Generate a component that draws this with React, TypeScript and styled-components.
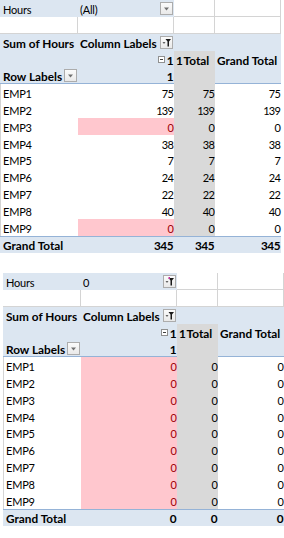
import React from "react";
import styled, { createGlobalStyle, css } from "styled-components";

const Global = createGlobalStyle`
  html, body { margin: 0; padding: 0; background: #ffffff; }
  body { font-family: Lato, "Open Sans", sans-serif; color: #000; }
`;

const C = {
  header: "#dce6f1",
  rule: "#95b3d7",
  total: "#d9d9d9",
  bad: "#ffc7ce",
  badText: "#9c0006",
  grid: "#d4d4d4",
};

const ROW_HEIGHTS = [17, 17, 17, 17, 16, 17, 17, 17, 17, 16, 17, 17, 17, 17, 17];

const Sheet = styled.div`
  width: 284px;
  height: 538px;
  overflow: hidden;
  display: flex;
  flex-direction: column;
  gap: 20px;
  background: #fff;
`;

const Pivot = styled.div<{ $cols: string; $left: number }>`
  display: grid;
  grid-template-columns: ${(p) => p.$cols};
  grid-template-rows: ${ROW_HEIGHTS.map((h) => `${h}px`).join(" ")};
  margin-left: ${(p) => p.$left}px;
`;

type Fill = "header" | "total" | "bad" | "plain" | "grid";

const fills: Record<Fill, string> = {
  header: C.header,
  total: C.total,
  bad: C.bad,
  plain: "#fff",
  grid: "#fff",
};

const Cell = styled.div<{
  $fill: Fill;
  $align?: "left" | "right" | "split";
  $bold?: boolean;
  $num?: boolean;
  $red?: boolean;
  $first?: boolean;
  $edge?: boolean;
  $under?: boolean;
  $over?: boolean;
}>`
  display: flex;
  align-items: flex-end;
  justify-content: ${(p) =>
    p.$align === "right" ? "flex-end" : p.$align === "split" ? "space-between" : "flex-start"};
  gap: 1px;
  min-width: 0;
  padding: 0 ${(p) => (p.$align === "split" ? 1 : p.$num ? 1 : 2)}px 1px
    ${(p) => (p.$first ? 3 : 2)}px;
  background: ${(p) => fills[p.$fill]};
  white-space: nowrap;
  line-height: 13px;
  font-size: ${(p) => (p.$bold ? 11.8 : 11)}px;
  font-weight: ${(p) => (p.$bold ? 700 : 400)};
  letter-spacing: ${(p) => (p.$num ? (p.$bold ? -0.5 : -0.8) : p.$bold ? 0 : -0.2)}px;
  color: ${(p) => (p.$red ? C.badText : "#000")};
  ${(p) => {
    const s: string[] = [];
    if (p.$fill === "grid") s.push(`inset -1px -1px 0 ${C.grid}`);
    if (p.$edge) s.push(`inset 1px 0 0 ${C.grid}`);
    if (p.$under) s.push(`inset 0 -1px 0 ${C.rule}`);
    if (p.$over) s.push(`inset 0 1px 0 ${C.rule}`);
    return s.length ? css`box-shadow: ${s.join(", ")};` : "";
  }}
`;

const DropBox = styled.span`
  align-self: center;
  flex: none;
  width: 13px;
  height: 13px;
  box-sizing: border-box;
  border: 1px solid #acacac;
  background: linear-gradient(#fbfbfb, #e9e9e9);
  display: flex;
  align-items: center;
  justify-content: center;
  letter-spacing: 0;
`;

const Collapse = styled.svg`
  flex: none;
  align-self: flex-end;
  margin: 0 1px 4px 0;
`;

function DropDown() {
  return (
    <DropBox>
      <svg width="11" height="11" viewBox="0 0 11 11">
        <path d="M3 4.5h5l-2.5 3z" fill="#707070" />
      </svg>
    </DropBox>
  );
}

function FilterOn({ accent }: { accent?: boolean }) {
  return (
    <DropBox>
      <svg width="11" height="11" viewBox="0 0 11 11">
        <path d="M1.5 5h3l-1.5 2z" fill="#606060" />
        <path d="M4.5 2h5.5l-2 2.5v5h-1.5v-5z" fill="#1a1a1a" />
        {accent && <rect x="4.5" y="1" width="1.5" height="2" fill="#c0309a" />}
      </svg>
    </DropBox>
  );
}

function CollapseBox() {
  return (
    <Collapse width="7" height="7" viewBox="0 0 7 7">
      <rect x="0.5" y="0.5" width="6" height="6" fill="#fff" stroke="#909090" />
      <path d="M2 3.5h3" stroke="#404040" />
    </Collapse>
  );
}

type PivotProps = {
  cols: string;
  left: number;
  filterValue: string;
  filterApplied: boolean;
  values: number[];
  total: number;
};

const employees = ["EMP1", "EMP2", "EMP3", "EMP4", "EMP5", "EMP6", "EMP7", "EMP8", "EMP9"];

function HoursPivot({ cols, left, filterValue, filterApplied, values, total }: PivotProps) {
  return (
    <Pivot $cols={cols} $left={left}>
      {/* page filter */}
      <Cell $fill="header" $first>Hours</Cell>
      <Cell $fill="header" $align="split">
        <span>{filterValue}</span>
        {filterApplied ? <FilterOn accent /> : <DropDown />}
      </Cell>
      <Cell $fill="grid" />
      <Cell $fill="grid" />

      <Cell $fill="grid" />
      <Cell $fill="grid" />
      <Cell $fill="grid" />
      <Cell $fill="grid" />

      {/* column header area */}
      <Cell $fill="header" $bold $first>Sum of Hours</Cell>
      <Cell $fill="header" $bold $align="split">
        <span>Column Labels</span>
        <FilterOn />
      </Cell>
      <Cell $fill="header" />
      <Cell $fill="header" />

      <Cell $fill="header" />
      <Cell $fill="header" $bold $num $align="right">
        <CollapseBox />
        1
      </Cell>
      <Cell $fill="total" $bold>1&#8202;Total</Cell>
      <Cell $fill="header" $bold>Grand Total</Cell>

      <Cell $fill="header" $bold $first $align="split" $under>
        <span>Row Labels</span>
        <DropDown />
      </Cell>
      <Cell $fill="header" $bold $num $align="right" $under>1</Cell>
      <Cell $fill="total" />
      <Cell $fill="header" $under />

      {/* body */}
      {employees.map((e, i) => {
        const v = values[i];
        return (
          <React.Fragment key={e}>
            <Cell $fill="plain" $first $edge>{e}</Cell>
            <Cell $fill={v === 0 ? "bad" : "plain"} $red={v === 0} $num $align="right">{v}</Cell>
            <Cell $fill="total" $num $align="right">{v}</Cell>
            <Cell $fill="plain" $num $align="right">{v}</Cell>
          </React.Fragment>
        );
      })}

      <Cell $fill="header" $bold $first $over>Grand Total</Cell>
      <Cell $fill="header" $bold $num $align="right" $over>{total}</Cell>
      <Cell $fill="header" $bold $num $align="right" $over>{total}</Cell>
      <Cell $fill="header" $bold $num $align="right" $over>{total}</Cell>
    </Pivot>
  );
}

const allHours = [75, 139, 0, 38, 7, 24, 22, 40, 0];
const zeroHours = [0, 0, 0, 0, 0, 0, 0, 0, 0];

export default function App() {
  return (
    <>
      <Global />
      <Sheet>
        <HoursPivot
          cols="78px 96px 41px 66px"
          left={0}
          filterValue="(All)"
          filterApplied={false}
          values={allHours}
          total={345}
        />
        <HoursPivot
          cols="78px 96px 41px 66px"
          left={3}
          filterValue="0"
          filterApplied
          values={zeroHours}
          total={0}
        />
      </Sheet>
    </>
  );
}
